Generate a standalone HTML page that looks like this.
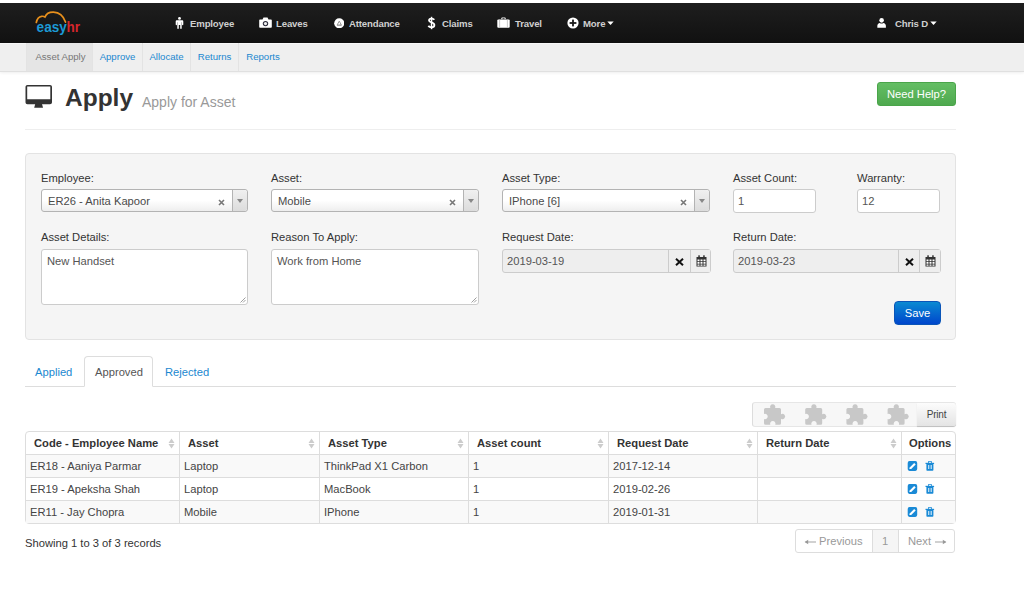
<!DOCTYPE html>
<html><head><meta charset="utf-8">
<style>
*{box-sizing:border-box;margin:0;padding:0}
html,body{width:1024px;height:599px;overflow:hidden;background:#fff;font-family:"Liberation Sans",sans-serif;color:#333;font-size:11.2px}
.abs{position:absolute}
svg{display:block}
#nav{position:absolute;left:0;top:3px;width:1024px;height:40px;background:linear-gradient(#1e1e1e,#111)}
.ni{position:absolute;top:15px;color:#d0d0d0;font-weight:bold;font-size:9.6px;letter-spacing:-0.15px;line-height:12px;white-space:nowrap}
.ic{position:absolute}
#sub{position:absolute;left:0;top:43px;width:1024px;height:29px;background:#efefef;border-bottom:1px solid #e0e0e0;box-shadow:inset 0 1px 0 #f7f7f7,0 1px 3px rgba(0,0,0,.07)}
.st{position:absolute;top:0;height:28px;line-height:28px;font-size:9.6px;color:#1b88d0;border-right:1px solid #e3e3e3;text-align:center}
.lbl{position:absolute;font-size:11.2px;color:#333;line-height:14px;white-space:nowrap}
.s2{position:absolute;height:23px;border:1px solid #b3b3b3;border-radius:3px;background:linear-gradient(#fff 0%,#fff 50%,#eee 100%)}
.s2 .t{position:absolute;left:6px;top:4.5px;font-size:11.2px;color:#4a4a4a;line-height:13px;white-space:nowrap}
.s2 svg{position:absolute}
.s2 .ar{position:absolute;right:0;top:0;width:15px;height:21px;border-left:1px solid #b3b3b3;background:linear-gradient(#f0f0f0,#dcdcdc);border-radius:0 3px 3px 0}
.s2 .ar:after{content:"";position:absolute;left:3.5px;top:9px;border-left:3px solid transparent;border-right:3px solid transparent;border-top:4px solid #888}
.inp{position:absolute;height:24px;border:1px solid #ccc;border-radius:3px;background:#fff;font-size:11.2px;color:#555;padding:5px 4px;line-height:13px}
.ta{position:absolute;border:1px solid #ccc;border-radius:3px;background:#fff;font-size:11.2px;color:#555;padding:5px 5px;line-height:13px}
.dt{position:absolute;height:24px;border:1px solid #ccc;border-radius:3px;background:#eee;font-size:11.2px;color:#555}
.dt .v{position:absolute;left:4px;top:5px;line-height:13px}
.dt .b{position:absolute;top:0;width:22px;height:22px;border-left:1px solid #ccc;background:#eee}
.dt .b svg{position:absolute}
table{position:absolute;border-collapse:separate;border-spacing:0;border:1px solid #ddd;border-radius:4px;font-size:11.2px;table-layout:fixed}
th,td{border-left:1px solid #ddd;border-top:1px solid #ddd;text-align:left;white-space:nowrap;vertical-align:middle;position:relative}
th:first-child,td:first-child{border-left:0}
tr:first-child th{border-top:0}
th{height:22px;font-weight:bold;color:#333;padding:0 8px}
td{height:23px;padding:0 4px;color:#444}
tbody tr:nth-child(odd) td{background:#f9f9f9}
.srt{position:absolute;right:4.5px;top:6px}
.t11{font-size:11.2px;line-height:13px;white-space:nowrap}
</style></head><body>
<div id="nav">
  <!-- logo -->
  <svg class="ic" style="left:34px;top:7px" width="50" height="30" viewBox="0 0 50 30">
    <path d="M2.3 12.5 C3 9.2 5 6.6 7.5 6.3 C9 6.1 10.3 6.5 11 7 C12.2 4 15.5 2 19.4 2.1 C25 2.3 29.5 6 31.5 12.1" fill="none" stroke="#e8901c" stroke-width="1.7" stroke-linecap="round"/>
    <text x="2.6" y="22" font-family="Liberation Sans" font-weight="bold" font-size="14.2" fill="#1c9ad6" textLength="30.2" lengthAdjust="spacingAndGlyphs">easy</text>
    <text x="32.5" y="22" font-family="Liberation Sans" font-weight="bold" font-size="14.2" fill="#d8262c" textLength="13.5" lengthAdjust="spacingAndGlyphs">hr</text>
  </svg>
  <!-- male -->
  <svg class="ic" style="left:175px;top:14px" width="9" height="12" viewBox="0 0 9 12">
    <circle cx="4.5" cy="1.4" r="1.4" fill="#fff"/>
    <path d="M2 3.3 H7 C7.8 3.3 8.3 3.8 8.3 4.5 V7.6 C8.3 8 8 8.2 7.6 8.2 C7.3 8.2 7 8 7 7.6 V5.2 H6.7 V11.2 C6.7 11.6 6.4 11.9 6 11.9 C5.6 11.9 5.2 11.6 5.2 11.2 V8 H3.8 V11.2 C3.8 11.6 3.4 11.9 3 11.9 C2.6 11.9 2.3 11.6 2.3 11.2 V5.2 H2 V7.6 C2 8 1.7 8.2 1.4 8.2 C1 8.2 0.7 8 0.7 7.6 V4.5 C0.7 3.8 1.2 3.3 2 3.3Z" fill="#fff"/>
  </svg>
  <span class="ni" style="left:190px">Employee</span>
  <!-- camera -->
  <svg class="ic" style="left:259px;top:14px" width="13" height="11" viewBox="0 0 13 11">
    <path d="M1 2.5 H3.5 L4.5 0.6 H8.5 L9.5 2.5 H12 C12.5 2.5 12.8 2.8 12.8 3.3 V10 C12.8 10.5 12.5 10.8 12 10.8 H1 C0.5 10.8 0.2 10.5 0.2 10 V3.3 C0.2 2.8 0.5 2.5 1 2.5Z" fill="#fff"/>
    <circle cx="6.5" cy="6.6" r="2.7" fill="#2a2a3a"/>
    <circle cx="6.5" cy="6.6" r="1.6" fill="#eee"/>
  </svg>
  <span class="ni" style="left:276px">Leaves</span>
  <!-- attendance -->
  <svg class="ic" style="left:333.5px;top:14.8px" width="10.5" height="10.5" viewBox="0 0 11 11">
    <circle cx="5.5" cy="5.5" r="5.3" fill="#fff"/>
    <path d="M3.3 7.3 L5.5 3.3 L7.7 7.3 Z" fill="none" stroke="#888" stroke-width="0.9"/>
    <rect x="3" y="7.6" width="5" height="0.8" fill="#999"/>
  </svg>
  <span class="ni" style="left:349px">Attendance</span>
  <!-- dollar -->
  <svg class="ic" style="left:427px;top:13px" width="9" height="14" viewBox="0 0 9 14">
    <path d="M7.3 3.8 C6.8 3 5.8 2.6 4.6 2.6 C3 2.6 2 3.3 2 4.4 C2 6.8 7.4 5.8 7.4 9 C7.4 10.4 6.2 11.3 4.4 11.3 C3 11.3 2 10.8 1.3 9.9" fill="none" stroke="#fff" stroke-width="1.8"/>
    <rect x="3.8" y="0.8" width="1.5" height="12.4" fill="#fff"/>
  </svg>
  <span class="ni" style="left:442px">Claims</span>
  <!-- suitcase -->
  <svg class="ic" style="left:497px;top:14px" width="13" height="11" viewBox="0 0 13 11">
    <path d="M4.3 2.3 V1.2 C4.3 0.7 4.6 0.4 5.1 0.4 H7.9 C8.4 0.4 8.7 0.7 8.7 1.2 V2.3 H7.6 V1.3 H5.4 V2.3Z" fill="#fff"/>
    <rect x="0.3" y="2.4" width="12.4" height="8.4" rx="1" fill="#fff"/>
    <rect x="2.3" y="2.4" width="0.8" height="8.4" fill="#bbb"/>
    <rect x="9.9" y="2.4" width="0.8" height="8.4" fill="#bbb"/>
  </svg>
  <span class="ni" style="left:515px">Travel</span>
  <!-- plus circle -->
  <svg class="ic" style="left:567px;top:14px" width="12" height="12" viewBox="0 0 12 12">
    <circle cx="6" cy="6" r="5.6" fill="#fff"/>
    <rect x="5.1" y="2.6" width="1.8" height="6.8" fill="#1a1a1a"/>
    <rect x="2.6" y="5.1" width="6.8" height="1.8" fill="#1a1a1a"/>
  </svg>
  <span class="ni" style="left:583px">More</span>
  <svg class="ic" style="left:606.5px;top:18px" width="7" height="5" viewBox="0 0 7 5"><path d="M0.3 0.5 H6.7 L3.5 4Z" fill="#fff"/></svg>
  <!-- user -->
  <svg class="ic" style="left:876.5px;top:15.3px" width="9.6" height="10" viewBox="0.4 0 10.2 11">
    <ellipse cx="5.3" cy="2.6" rx="2.5" ry="2.5" fill="#fff"/>
    <path d="M0.6 10.6 V8.6 C0.6 6.9 1.8 5.7 3.3 5.4 C3.9 5.8 4.6 6 5.3 6 C6 6 6.7 5.8 7.3 5.4 C8.8 5.7 10 6.9 10 8.6 V10.6 Z" fill="#fff"/>
  </svg>
  <span class="ni" style="left:895px">Chris D</span>
  <svg class="ic" style="left:929.5px;top:18px" width="7" height="5" viewBox="0 0 7 5"><path d="M0.3 0.5 H6.7 L3.5 4Z" fill="#fff"/></svg>
</div>
<div id="sub">
  <div class="st" style="left:26px;width:67px;background:#e5e5e5;color:#777;border-left:1px solid #e3e3e3;padding-left:2px">Asset Apply</div>
  <div class="st" style="left:93px;width:50px">Approve</div>
  <div class="st" style="left:143px;width:48px">Allocate</div>
  <div class="st" style="left:191px;width:48px">Returns</div>
  <div class="st" style="left:239px;width:48px;border-right:0">Reports</div>
</div>

<!-- heading -->
<svg class="abs" style="left:25px;top:84px" width="28" height="24" viewBox="0 0 28 24">
  <path d="M2.5 1 H25 C26.2 1 27 1.8 27 3 V18.3 C27 19.5 26.2 20.3 25 20.3 H2.5 C1.3 20.3 0.5 19.5 0.5 18.3 V3 C0.5 1.8 1.3 1 2.5 1Z M2.2 2.6 V15.2 H25.3 V2.6Z" fill="#333" fill-rule="evenodd"/>
  <path d="M10.2 20 H17 L18 23.8 H9.2Z" fill="#333"/>
</svg>
<div class="abs" style="left:65px;top:83px;font-size:24.5px;font-weight:bold;color:#333;line-height:30px">Apply</div>
<div class="abs" style="left:142px;top:93.5px;font-size:14px;color:#999;line-height:17px">Apply for Asset</div>
<div class="abs t11" style="left:877px;top:82px;width:79px;height:24px;border:1px solid #4aa54a;border-radius:3px;background:linear-gradient(#64be64,#4fa94f);color:#fff;line-height:22px;text-align:center">Need Help?</div>
<div class="abs" style="left:25px;top:129px;width:931px;height:1px;background:#eee"></div>

<!-- form panel -->
<div class="abs" style="left:25px;top:153px;width:931px;height:187px;background:#f5f5f5;border:1px solid #e3e3e3;border-radius:4px"></div>
<div class="lbl" style="left:41px;top:170.5px">Employee:</div>
<div class="lbl" style="left:271px;top:170.5px">Asset:</div>
<div class="lbl" style="left:502px;top:170.5px">Asset Type:</div>
<div class="lbl" style="left:733px;top:170.5px">Asset Count:</div>
<div class="lbl" style="left:857px;top:170.5px">Warranty:</div>

<div class="s2" style="left:41px;top:189px;width:207px"><span class="t">ER26 - Anita Kapoor</span><svg style="left:176px;top:8.5px" width="7" height="7" viewBox="0 0 7 7"><path d="M1 1 L6 6 M6 1 L1 6" stroke="#777" stroke-width="1.6"/></svg><span class="ar"></span></div>
<div class="s2" style="left:271px;top:189px;width:208px"><span class="t">Mobile</span><svg style="left:177px;top:8.5px" width="7" height="7" viewBox="0 0 7 7"><path d="M1 1 L6 6 M6 1 L1 6" stroke="#777" stroke-width="1.6"/></svg><span class="ar"></span></div>
<div class="s2" style="left:502px;top:189px;width:208px"><span class="t">IPhone [6]</span><svg style="left:177px;top:8.5px" width="7" height="7" viewBox="0 0 7 7"><path d="M1 1 L6 6 M6 1 L1 6" stroke="#777" stroke-width="1.6"/></svg><span class="ar"></span></div>
<div class="inp" style="left:733px;top:189px;width:83px">1</div>
<div class="inp" style="left:857px;top:189px;width:83px">12</div>

<div class="lbl" style="left:41px;top:229.5px">Asset Details:</div>
<div class="lbl" style="left:271px;top:229.5px">Reason To Apply:</div>
<div class="lbl" style="left:502px;top:229.5px">Request Date:</div>
<div class="lbl" style="left:733px;top:229.5px">Return Date:</div>

<div class="ta" style="left:41px;top:249px;width:207px;height:56px">New Handset<svg class="abs" style="right:1px;bottom:1px" width="6" height="6" viewBox="0 0 6 6"><path d="M0.5 5.5 L5.5 0.5 M3 5.5 L5.5 3" stroke="#888" stroke-width="0.8"/></svg></div>
<div class="ta" style="left:271px;top:249px;width:208px;height:56px">Work from Home<svg class="abs" style="right:1px;bottom:1px" width="6" height="6" viewBox="0 0 6 6"><path d="M0.5 5.5 L5.5 0.5 M3 5.5 L5.5 3" stroke="#888" stroke-width="0.8"/></svg></div>

<div class="dt" style="left:502px;top:249px;width:209px"><span class="v">2019-03-19</span>
  <span class="b" style="left:165px;width:22px"><svg style="left:6px;top:8px" width="9" height="8" viewBox="0 0 9 8"><path d="M1 0.8 L8 7.2 M8 0.8 L1 7.2" stroke="#111" stroke-width="2"/></svg></span>
  <span class="b" style="left:187px;width:20px"><svg style="left:5px;top:5px" width="11" height="12" viewBox="0 0 11 12"><path d="M0.5 2 H10.5 V11.5 H0.5Z" fill="#333"/><path d="M1.5 4.5h2v1.7h-2zM4.5 4.5h2v1.7h-2zM7.5 4.5h2v1.7h-2zM1.5 7h2v1.7h-2zM4.5 7h2v1.7h-2zM7.5 7h2v1.7h-2zM1.5 9.5h2v1.2h-2zM4.5 9.5h2v1.2h-2zM7.5 9.5h2v1.2h-2z" fill="#fff"/><rect x="2.3" y="0.3" width="1.5" height="2.6" fill="#333"/><rect x="7.2" y="0.3" width="1.5" height="2.6" fill="#333"/></svg></span></div>
<div class="dt" style="left:733px;top:249px;width:208px"><span class="v">2019-03-23</span>
  <span class="b" style="left:164px;width:21px"><svg style="left:6px;top:8px" width="9" height="8" viewBox="0 0 9 8"><path d="M1 0.8 L8 7.2 M8 0.8 L1 7.2" stroke="#111" stroke-width="2"/></svg></span>
  <span class="b" style="left:185px;width:21px"><svg style="left:5px;top:5px" width="11" height="12" viewBox="0 0 11 12"><path d="M0.5 2 H10.5 V11.5 H0.5Z" fill="#333"/><path d="M1.5 4.5h2v1.7h-2zM4.5 4.5h2v1.7h-2zM7.5 4.5h2v1.7h-2zM1.5 7h2v1.7h-2zM4.5 7h2v1.7h-2zM7.5 7h2v1.7h-2zM1.5 9.5h2v1.2h-2zM4.5 9.5h2v1.2h-2zM7.5 9.5h2v1.2h-2z" fill="#fff"/><rect x="2.3" y="0.3" width="1.5" height="2.6" fill="#333"/><rect x="7.2" y="0.3" width="1.5" height="2.6" fill="#333"/></svg></span></div>

<div class="abs t11" style="left:894px;top:301px;width:47px;height:24px;border:1px solid #0a55b8;border-radius:4px;background:linear-gradient(#0a8ad2,#0046cc);color:#fff;line-height:22px;text-align:center">Save</div>

<!-- tabs -->
<div class="abs" style="left:25px;top:386px;width:931px;height:1px;background:#ddd"></div>
<div class="abs t11" style="left:35px;top:365.5px;color:#1b88d0">Applied</div>
<div class="abs" style="left:84px;top:356px;width:69px;height:31px;border:1px solid #ddd;border-bottom-color:#fff;border-radius:4px 4px 0 0;background:#fff"></div>
<div class="abs t11" style="left:95px;top:365.5px;color:#555">Approved</div>
<div class="abs t11" style="left:165px;top:365.5px;color:#1b88d0">Rejected</div>

<!-- toolbar -->
<div class="abs" style="left:752px;top:402px;width:204px;height:25px;border:1px solid #e6e6e6;border-left-color:#dcdcdc;border-radius:3px;background:#f7f7f7"></div>
<svg class="abs" style="left:762px;top:403px" width="150" height="23" viewBox="0 0 150 23">
  <defs><path id="pz" d="M3.5 5.1 H8.3 A2.65 2.65 0 1 1 13.1 5.1 H17.5 Q19 5.1 19 6.6 V11.3 A2.65 2.65 0 1 1 19 15.7 V20.3 Q19 21.8 17.5 21.8 H13.3 A2.7 2.7 0 1 0 8.3 21.8 H3.5 Q2 21.8 2 20.3 V16 A2.7 2.7 0 1 0 2 11 V6.6 Q2 5.1 3.5 5.1 Z" fill="#c8c8c8"/></defs>
  <use href="#pz" x="0" y="0"/><use href="#pz" x="41.2" y="0"/><use href="#pz" x="82.4" y="0"/><use href="#pz" x="123.6" y="0"/>
</svg>
<div class="abs" style="left:917px;top:403px;width:39px;height:23px;border-radius:0 3px 3px 0;background:linear-gradient(#fcfcfc,#e4e4e4);box-shadow:0 1px 1px rgba(0,0,0,.18);font-size:10px;letter-spacing:-0.2px;color:#444;line-height:23.5px;text-align:center">Print</div>

<table style="left:25px;top:431px;width:931px">
<colgroup><col style="width:153px"><col style="width:140px"><col style="width:149px"><col style="width:140px"><col style="width:149px"><col style="width:144px"><col style="width:54px"></colgroup>
<thead><tr>
<th>Code - Employee Name<svg class="srt" width="7" height="11" viewBox="0 0 7 11"><path d="M3.5 0.5 L6.5 5 H0.5Z M0.5 6 H6.5 L3.5 10.5Z" fill="#ccc"/></svg></th>
<th>Asset<svg class="srt" width="7" height="11" viewBox="0 0 7 11"><path d="M3.5 0.5 L6.5 5 H0.5Z M0.5 6 H6.5 L3.5 10.5Z" fill="#ccc"/></svg></th>
<th>Asset Type<svg class="srt" width="7" height="11" viewBox="0 0 7 11"><path d="M3.5 0.5 L6.5 5 H0.5Z M0.5 6 H6.5 L3.5 10.5Z" fill="#ccc"/></svg></th>
<th>Asset count<svg class="srt" width="7" height="11" viewBox="0 0 7 11"><path d="M3.5 0.5 L6.5 5 H0.5Z M0.5 6 H6.5 L3.5 10.5Z" fill="#ccc"/></svg></th>
<th>Request Date<svg class="srt" width="7" height="11" viewBox="0 0 7 11"><path d="M3.5 0.5 L6.5 5 H0.5Z M0.5 6 H6.5 L3.5 10.5Z" fill="#ccc"/></svg></th>
<th>Return Date<svg class="srt" width="7" height="11" viewBox="0 0 7 11"><path d="M3.5 0.5 L6.5 5 H0.5Z M0.5 6 H6.5 L3.5 10.5Z" fill="#ccc"/></svg></th>
<th style="padding:0 7px">Options</th>
</tr></thead>
<tbody>
<tr><td>ER18 - Aaniya Parmar</td><td>Laptop</td><td>ThinkPad X1 Carbon</td><td>1</td><td>2017-12-14</td><td></td><td class="op"></td></tr>
<tr><td>ER19 - Apeksha Shah</td><td>Laptop</td><td>MacBook</td><td>1</td><td>2019-02-26</td><td></td><td class="op"></td></tr>
<tr><td>ER11 - Jay Chopra</td><td>Mobile</td><td>IPhone</td><td>1</td><td>2019-01-31</td><td></td><td class="op"></td></tr>
</tbody>
</table>
<svg class="abs" style="left:907px;top:460px" width="30" height="60" viewBox="0 0 30 60">
  <defs>
    <g id="ed"><rect x="0.7" y="1.1" width="9.5" height="9.8" rx="1.8" fill="#1a8ad6"/><path d="M2.3 9.1 L2.7 7.4 L7.2 2.9 L8.7 4.4 L4.2 8.9Z" fill="#fff"/></g>
    <g id="tr"><path d="M18.5 2.8 H27.1 V4 H18.5Z" fill="#1a8ad6"/><path d="M21.1 2.9 V1.6 Q21.1 1 21.7 1 H24.2 Q24.8 1 24.8 1.6 V2.9 H24 V1.8 H21.9 V2.9Z" fill="#1a8ad6"/><path d="M19.4 4 H26.4 V10.1 Q26.4 10.8 25.7 10.8 H20.1 Q19.4 10.8 19.4 10.1Z" fill="#1a8ad6"/><path d="M21.1 5.1 h1.2 v4 h-1.2z M23.6 5.1 h1.2 v4 h-1.2z" fill="#cfe6f6"/></g>
  </defs>
  <use href="#ed" y="0"/><use href="#tr" y="0"/>
  <use href="#ed" y="23"/><use href="#tr" y="23"/>
  <use href="#ed" y="46"/><use href="#tr" y="46"/>
</svg>

<div class="abs t11" style="left:25px;top:537px;color:#333">Showing 1 to 3 of 3 records</div>
<div class="abs" style="left:795px;top:529px;width:160px;height:24px;border:1px solid #ddd;border-radius:3px;background:#fff"></div>
<div class="abs" style="left:872px;top:530px;width:27px;height:22px;border-left:1px solid #ddd;border-right:1px solid #ddd;background:#f5f5f5"></div>
<svg class="abs" style="left:804px;top:538px" width="13" height="8" viewBox="0 0 13 8"><path d="M1.5 4 H12" stroke="#999" stroke-width="0.9"/><path d="M0.6 4 L4.2 1.8 L4.2 6.2Z" fill="#999"/></svg>
<div class="abs t11" style="left:819px;top:535px;color:#999">Previous</div>
<div class="abs t11" style="left:882px;top:535px;color:#999">1</div>
<div class="abs t11" style="left:908px;top:535px;color:#999">Next</div>
<svg class="abs" style="left:934px;top:538px" width="13" height="8" viewBox="0 0 13 8"><path d="M1 4 H11.5" stroke="#999" stroke-width="0.9"/><path d="M12.4 4 L8.8 1.8 L8.8 6.2Z" fill="#999"/></svg>
</body></html>
